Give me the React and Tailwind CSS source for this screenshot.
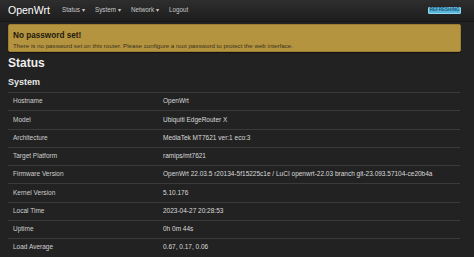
export default function App() {
  const rows = [
    ["Hostname", "OpenWrt"],
    ["Model", "Ubiquiti EdgeRouter X"],
    ["Architecture", "MediaTek MT7621 ver:1 eco:3"],
    ["Target Platform", "ramips/mt7621"],
    ["Firmware Version", "OpenWrt 22.03.5 r20134-5f15225c1e / LuCI openwrt-22.03 branch git-23.093.57104-ce20b4a"],
    ["Kernel Version", "5.10.176"],
    ["Local Time", "2023-04-27 20:28:53"],
    ["Uptime", "0h 0m 44s"],
    ["Load Average", "0.67, 0.17, 0.06"],
  ];
  const font = { fontFamily: '"Liberation Sans", Arial, sans-serif' };
  return (
    <div className="w-[474px] h-[257px] overflow-hidden bg-[#222222] text-[#cccccc]" style={font}>
      <div className="h-[22px] flex items-center pl-[8px] pr-[13px] bg-gradient-to-b from-[#2e2e2e] to-[#1d1d1d] border-b border-[#181818]">
        <div className="text-[10.5px] text-white leading-none w-[54px]">OpenWrt</div>
        <div className="flex items-center text-[6.3px] text-[#c8c8c8] leading-none">
          <span className="w-[33px]">Status ▾</span>
          <span className="w-[36px]">System ▾</span>
          <span className="w-[38px]">Network ▾</span>
          <span>Logout</span>
        </div>
        <div className="ml-auto h-[7px] w-[33px] flex items-center justify-center bg-[#5ab6d8] border border-[#8fd6f0] rounded-[1px] text-[4.6px] font-bold text-[#1a5a7a] leading-none">
          REFRESHING
        </div>
      </div>
      <div className="px-[8px] pr-[13px]">
        <div className="mt-[2px] h-[28px] bg-[#b4943f] rounded-[2px] border border-[#9c7f33] px-[4px] pt-[6px] text-[#2a2415] shadow-[0_1px_1px_rgba(0,0,0,0.5)]">
          <div className="text-[8.2px] font-bold leading-[9px] text-[#1f1a0e]">No password set!</div>
          <div className="text-[6.2px] leading-[7px] mt-[2px] text-[#3a3220]">
            There is no password set on this router. Please configure a root password to protect the web interface.
          </div>
        </div>
        <div className="text-[12px] font-bold text-[#eeeeee] leading-[14px] mt-[4px]">Status</div>
        <div className="text-[9px] font-bold text-[#e6e6e6] leading-[11px] mt-[7px]">System</div>
        <div className="mt-[4px] w-[452px]">
          {rows.map(([k, v]) => (
            <div key={k} className="h-[18.25px] border-t border-[#3a3a3a] flex items-center text-[6.5px] leading-none">
              <div className="w-[155px] pl-[5px] text-[#cfcfcf]">{k}</div>
              <div className="text-[#dadada] whitespace-nowrap">{v}</div>
            </div>
          ))}
        </div>
      </div>
    </div>
  );
}
